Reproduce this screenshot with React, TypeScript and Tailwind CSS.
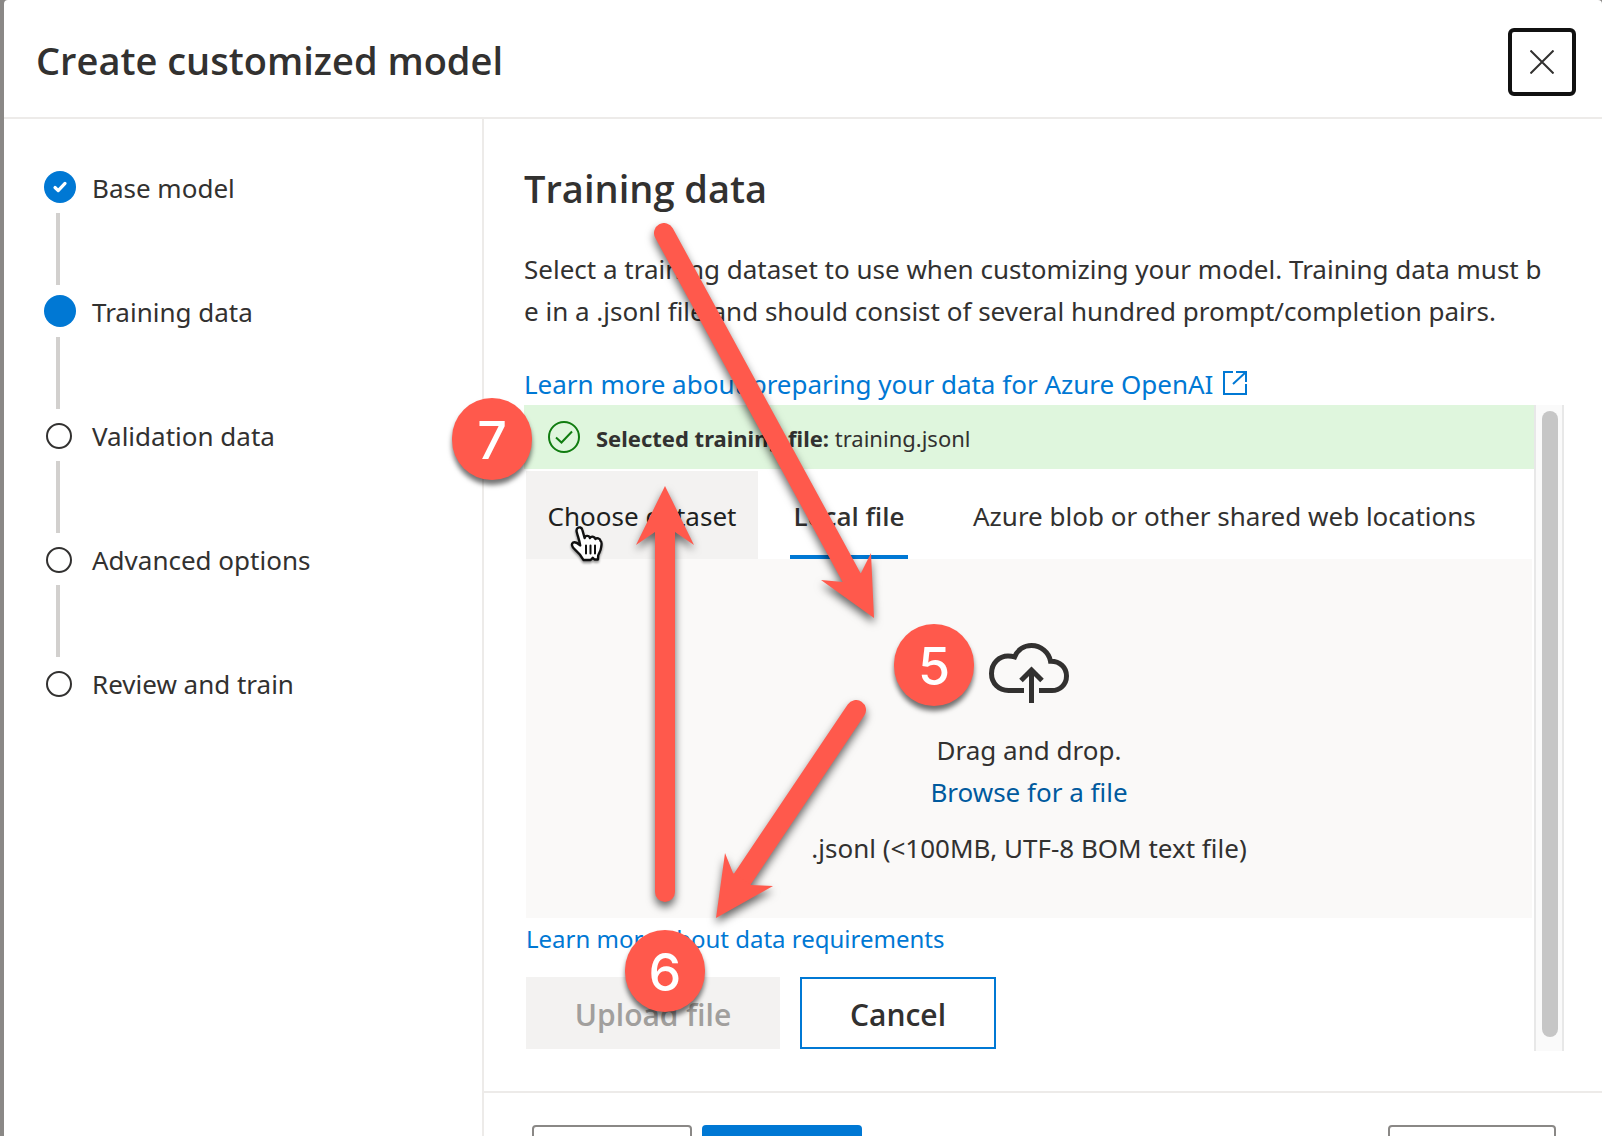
import React from 'react';

type StepState = 'done' | 'current' | 'todo';

const steps: { label: string; state: StepState }[] = [
  { label: 'Base model', state: 'done' },
  { label: 'Training data', state: 'current' },
  { label: 'Validation data', state: 'todo' },
  { label: 'Advanced options', state: 'todo' },
  { label: 'Review and train', state: 'todo' },
];

function StepMarker({ state }: { state: StepState }) {
  if (state === 'todo') {
    return <span className="mt-0.5 ml-0.5 block size-[26px] rounded-full border-2 border-[#323130]" />;
  }
  return (
    <span className="flex size-8 items-center justify-center rounded-full bg-[#0078d4]">
      {state === 'done' && (
        <svg viewBox="0 0 16 14" className="h-3.5 w-4" fill="none" stroke="white" strokeWidth="3.2" strokeLinecap="round" strokeLinejoin="round" aria-hidden="true">
          <path d="M3 7.5 6.2 10.6 13 3.4" />
        </svg>
      )}
    </span>
  );
}

function Steps() {
  return (
    <nav aria-label="Steps" className="w-[480px] shrink-0 border-r-2 border-[#edebe9] pt-[52px] pl-10">
      <ol>
        {steps.map((step, i) => (
          <li key={step.label} className="flex gap-4">
            <div className="w-8">
              <div className="flex h-8 items-center">
                <StepMarker state={step.state} />
              </div>
              {i < steps.length - 1 && <div className="my-2.5 ml-3 h-[72px] w-1 bg-[#d2d0ce]" />}
            </div>
            <button type="button" className="h-8 text-[26px] leading-[34px] whitespace-nowrap">
              {step.label}
            </button>
          </li>
        ))}
      </ol>
    </nav>
  );
}

function Badge({ n, place }: { n: number; place: string }) {
  return (
    <div
      className={`absolute flex h-[82px] w-20 items-center justify-center rounded-full bg-[#ff594c] pt-[3px] font-['Inter',sans-serif] text-[52px] leading-none font-medium text-white shadow-[0_5px_5px_rgba(0,0,0,0.55)] ${place}`}
    >
      {n}
    </div>
  );
}

function Annotations() {
  return (
    <div className="pointer-events-none absolute top-0 left-0">
      <svg width="1602" height="1136" viewBox="0 0 1602 1136" className="max-w-none" aria-hidden="true">
        <g fill="#ff594c" stroke="#ff594c" className="drop-shadow-[0_5px_4px_rgba(0,0,0,0.6)]">
          <path d="M664 233 854 582" strokeWidth="20" strokeLinecap="round" fill="none" />
          <path d="M874 618 821 580 843 582 861 573 871 553Z" stroke="none" />
        </g>
        <g fill="#ff594c" stroke="#ff594c" className="drop-shadow-[0_5px_4px_rgba(0,0,0,0.6)]">
          <path d="M856 710 739 884" strokeWidth="20" strokeLinecap="round" fill="none" />
          <path d="M716 918 725 853 733 873 751 885 773 886Z" stroke="none" />
        </g>
        <g fill="#ff594c" stroke="#ff594c" className="drop-shadow-[0_5px_4px_rgba(0,0,0,0.6)]">
          <path d="M665 892V525" strokeWidth="20" strokeLinecap="round" fill="none" />
          <path d="M665 486 694 545 675 532H655L636 545Z" stroke="none" />
        </g>
        <g transform="translate(570 525)" className="drop-shadow-[0_2px_1px_rgba(0,0,0,0.4)]">
          <path
            d="M7.500 3.200C9.200 1.600 11.800 2.400 12.300 4.800L14.600 13C15 10.400 19 10 20 13C21 11 24.600 11.200 25.400 14C26.600 12.600 30 13 30.600 16C31.800 16.800 31.600 20 31.200 22C30.800 26 29 28 28.200 30.500L28 34.500H24.500L22.800 32.800 20.600 35H13.500C11.500 31 8.500 27.600 5 24.600C1.600 21.600 1.200 19 3 17.600C5.200 16.400 8 18.400 10.200 20.400C9.600 15.600 7.800 11.400 6.800 7.200C6.300 5.400 6.500 4.100 7.500 3.200Z"
            fill="white"
            stroke="#111"
            strokeWidth="2.4"
            strokeLinejoin="round"
          />
          <path d="M16 20.500V28.500M20.500 20.500V28.500M25 20.500V28.500" stroke="#111" strokeWidth="2" strokeLinecap="round" />
        </g>
      </svg>
      <Badge n={7} place="left-[452px] top-[398px]" />
      <Badge n={5} place="left-[894px] top-[624px]" />
      <Badge n={6} place="left-[625px] top-[930px]" />
    </div>
  );
}

function DropZone() {
  return (
    <div className="mr-0.5 flex flex-col items-center bg-[#faf9f8] pt-[84px] pb-[49px] text-[26px] leading-[42px]">
      <svg viewBox="0 0 80 60" className="h-[60px] w-20" fill="none" stroke="#323130" strokeWidth="5" aria-hidden="true">
        <path d="M35 47.5H19.5C10 47.5 2.5 40.500 2.500 30.500C2.500 20 10.500 13 19 13C21.600 13 23.500 13.300 25.600 14C28.500 7 35 2.500 42.500 2.500C52 2.500 60 9.500 61.500 18.200C71 18 77.500 24.500 77.500 33C77.500 41.500 71 47.500 63 47.500H50" />
        <path d="M42.500 60V28M32 37.500 42.500 27 53 37.500" />
      </svg>
      <p className="mt-[26px]">Drag and drop.</p>
      <a href="#browse" className="text-[#005a9e]">Browse for a file</a>
      <p className="mt-3.5">.jsonl (&lt;100MB, UTF-8 BOM text file)</p>
    </div>
  );
}

function DatasetPanel() {
  return (
    <div className="mr-[38px] flex">
      <div className="min-w-0 flex-1 pb-0.5">
        <div role="status" className="flex h-16 items-center gap-4 bg-[#dff6dd] pl-6 text-[22px]">
          <svg viewBox="0 0 32 32" className="size-8" fill="none" stroke="#107c10" strokeWidth="2" aria-hidden="true">
            <circle cx="16" cy="16" r="15" />
            <path d="M8 16.500 13.500 21.500 24 10.500" />
          </svg>
          <p className="pt-0.5">
            <strong className="font-bold">Selected training file:</strong> training.jsonl
          </p>
        </div>
        <div className="pl-0.5">
          <div role="tablist" className="mt-0.5 flex h-[88px] text-[26px]">
            <button type="button" role="tab" aria-selected="false" className="w-[232px] bg-[#f3f2f1] pt-0.5 text-[#201f1e]">
              Choose dataset
            </button>
            <button type="button" role="tab" aria-selected="true" className="ml-8 w-[118px] border-b-4 border-[#0078d4] pt-1.5 font-['Open_Sans',sans-serif] font-semibold whitespace-nowrap">
              Local file
            </button>
            <button type="button" role="tab" aria-selected="false" className="ml-[65px] pt-0.5 whitespace-nowrap">
              Azure blob or other shared web locations
            </button>
          </div>
          <DropZone />
          <a href="#requirements" className="mt-[3px] block text-2xl leading-9 text-[#0078d4]">
            Learn more about data requirements
          </a>
          <div className="mt-5 flex gap-5 font-['Open_Sans',sans-serif] text-[30px] font-semibold">
            <button type="button" disabled className="h-[72px] w-[254px] bg-[#f3f2f1] pt-0.5 text-[#a19f9d]">
              Upload file
            </button>
            <button type="button" className="h-[72px] w-[196px] border-2 border-[#0078d4] bg-white pt-0.5">
              Cancel
            </button>
          </div>
        </div>
      </div>
      <div className="flex w-[30px] justify-end border-x-2 border-[#e8e8e8] bg-[#fafafa] pt-1.5 pr-1 pb-3.5">
        <div className="w-4 rounded-full bg-[#c6c6c6]" />
      </div>
    </div>
  );
}

export default function App() {
  return (
    <div className="relative flex h-screen overflow-hidden bg-[#8a8886] pl-1 font-['Noto_Sans','Open_Sans',sans-serif] text-[#323130]">
      <div role="dialog" aria-labelledby="dialog-title" className="flex min-w-0 flex-1 flex-col rounded-t-sm bg-white">
        <header className="flex h-[119px] shrink-0 items-center justify-between border-b-2 border-[#edebe9] pt-1.5 pr-[26px] pl-8">
          <h1 id="dialog-title" className="pb-1 font-['Open_Sans',sans-serif] text-[38px] leading-[52px] font-semibold whitespace-nowrap">Create customized model</h1>
          <button type="button" aria-label="Close" className="flex size-[68px] items-center justify-center rounded-md border-4 border-[#111] bg-white">
            <svg viewBox="0 0 24 24" className="size-6" stroke="#323130" strokeWidth="2" aria-hidden="true">
              <path d="M0.500 0.500 23.500 23.500M23.500 0.500 0.500 23.500" />
            </svg>
          </button>
        </header>
        <div className="flex flex-1">
          <Steps />
          <main className="flex min-w-0 flex-1 flex-col">
            <section className="pt-[43px] pb-10 pl-10">
              <h2 className="font-['Open_Sans',sans-serif] text-[38px] leading-[52px] font-semibold">Training data</h2>
              <p className="mt-[34px] text-[26px] leading-[42px] whitespace-nowrap">
                Select a training dataset to use when customizing your model. Training data must b
                <br />e in a .jsonl file and should consist of several hundred prompt/completion pairs.
              </p>
              <a href="#learn" className="mt-8 flex items-center gap-2.5 text-[26px] leading-[41px] whitespace-nowrap text-[#0078d4]">
                Learn more about preparing your data for Azure OpenAI
                <svg viewBox="0 0 24 24" className="mb-1 size-6" fill="none" stroke="currentColor" strokeWidth="2" aria-hidden="true">
                  <path d="M10 1H1V23H23V13M13 1H23V11M23 1 10 13" />
                </svg>
              </a>
              <DatasetPanel />
            </section>
            <footer className="flex gap-2.5 border-t-2 border-[#edebe9] pt-8 pr-[46px] pb-8 pl-12">
              <button type="button" aria-label="Back" className="h-16 w-40 rounded-sm border-2 border-[#8a8886] bg-white" />
              <button type="button" aria-label="Next" className="h-16 w-40 rounded-sm bg-[#0078d4]" />
              <button type="button" aria-label="Cancel setup" className="ml-auto h-16 w-[168px] rounded-sm border-2 border-[#8a8886] bg-white" />
            </footer>
          </main>
        </div>
      </div>
      <Annotations />
    </div>
  );
}
